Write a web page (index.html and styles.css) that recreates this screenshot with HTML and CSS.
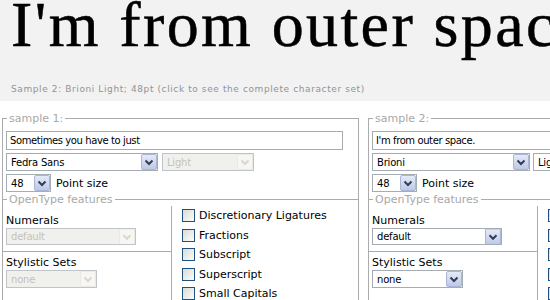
FILE: index.html
```html
<!DOCTYPE html>
<html lang="en">
<head>
    <meta charset="UTF-8">
    <meta name="viewport" content="width=device-width, initial-scale=1.0">
    <title>Font Sampler</title>
    <link rel="stylesheet" href="styles.css">
</head>
<body>
    <div class="header">
        <h1 class="preview">I'm from outer space.</h1>
        <p class="caption">Sample 2: Brioni Light; 48pt (click to see the complete character set)</p>
    </div>

    <div class="samples">
        <fieldset class="sample">
            <legend>sample 1:</legend>
            <input type="text" class="sample-text" value="Sometimes you have to just">
            <div class="row">
                <select class="font-select">
                    <option>Fedra Sans</option>
                </select>
                <select class="weight-select" disabled>
                    <option>Light</option>
                </select>
            </div>
            <div class="row">
                <select class="size-select">
                    <option>48</option>
                </select>
                <label class="size-label">Point size</label>
            </div>

            <fieldset class="features">
                <legend>OpenType features</legend>
                <div class="features-grid">
                    <div class="features-left">
                        <div class="feature-group">
                            <label>Numerals</label>
                            <select class="numerals-select" disabled>
                                <option>default</option>
                            </select>
                        </div>
                        <div class="feature-group">
                            <label>Stylistic Sets</label>
                            <select class="sets-select" disabled>
                                <option>none</option>
                            </select>
                        </div>
                    </div>
                    <ul class="feature-checks">
                        <li><input type="checkbox" id="dlig1"><label for="dlig1">Discretionary Ligatures</label></li>
                        <li><input type="checkbox" id="frac1"><label for="frac1">Fractions</label></li>
                        <li><input type="checkbox" id="subs1"><label for="subs1">Subscript</label></li>
                        <li><input type="checkbox" id="sups1"><label for="sups1">Superscript</label></li>
                        <li><input type="checkbox" id="smcp1"><label for="smcp1">Small Capitals</label></li>
                    </ul>
                </div>
            </fieldset>
        </fieldset>

        <fieldset class="sample">
            <legend>sample 2:</legend>
            <input type="text" class="sample-text" value="I'm from outer space.">
            <div class="row">
                <select class="font-select wide">
                    <option>Brioni</option>
                </select>
                <select class="weight-select near">
                    <option>Light</option>
                </select>
            </div>
            <div class="row">
                <select class="size-select">
                    <option>48</option>
                </select>
                <label class="size-label">Point size</label>
            </div>

            <fieldset class="features">
                <legend>OpenType features</legend>
                <div class="features-grid">
                    <div class="features-left">
                        <div class="feature-group">
                            <label>Numerals</label>
                            <select class="numerals-select">
                                <option>default</option>
                            </select>
                        </div>
                        <div class="feature-group">
                            <label>Stylistic Sets</label>
                            <select class="sets-select">
                                <option>none</option>
                            </select>
                        </div>
                    </div>
                    <ul class="feature-checks">
                        <li><input type="checkbox" id="dlig2"><label for="dlig2">Discretionary Ligatures</label></li>
                        <li><input type="checkbox" id="frac2"><label for="frac2">Fractions</label></li>
                        <li><input type="checkbox" id="subs2"><label for="subs2">Subscript</label></li>
                        <li><input type="checkbox" id="sups2"><label for="sups2">Superscript</label></li>
                        <li><input type="checkbox" id="smcp2"><label for="smcp2">Small Capitals</label></li>
                    </ul>
                </div>
            </fieldset>
        </fieldset>
    </div>
</body>
</html>
```

FILE: styles.css
```css
* {
    margin: 0;
    padding: 0;
    box-sizing: border-box;
}
html, body {
    overflow: hidden;
}
body {
    font-family: "DejaVu Sans", Verdana, sans-serif;
    font-size: 11px;
    color: #000;
    background: #fff;
}
.header {
    background: #f2f2f2;
    height: 101px;
    padding: 0 11px;
    white-space: nowrap;
}
.preview {
    font-family: "Liberation Serif", "Times New Roman", serif;
    font-size: 64px;
    font-weight: normal;
    line-height: 50px;
    letter-spacing: 2.4px;
    -webkit-text-stroke: 0.5px #000;
}
.caption {
    margin-top: 34px;
    font-size: 9px;
    letter-spacing: 0.6px;
    color: #939393;
}
.samples {
    display: flex;
    gap: 9px;
    padding: 11px 0 0 2px;
}
.sample {
    flex: 0 0 357px;
    border: 1px solid #ababab;
    padding: 0 3px;
    height: 300px;
}
legend {
    color: #a8a8a8;
    font-size: 11px;
    line-height: 13px;
    padding: 0 2px;
    margin-left: 1px;
}
.sample-text {
    display: block;
    width: 337px;
    height: 19px;
    margin-top: 6px;
    border: 1px solid #a5acb2;
    padding: 0 3px;
    font-family: "DejaVu Sans", Verdana, sans-serif;
    font-size: 10px;
    letter-spacing: -0.4px;
    color: #000;
    outline: none;
}
.row {
    display: flex;
    align-items: center;
    gap: 4px;
    margin-top: 3px;
}
select {
    appearance: none;
    -webkit-appearance: none;
    height: 18px;
    border: 1px solid #a5acb2;
    border-radius: 0;
    padding: 0 18px 0 4px;
    font-family: "DejaVu Sans", Verdana, sans-serif;
    font-size: 10px;
    letter-spacing: -0.2px;
    color: #000;
    background: #fff url("data:image/svg+xml,%3Csvg xmlns='http://www.w3.org/2000/svg' width='16' height='16'%3E%3Cdefs%3E%3ClinearGradient id='g' x1='0' y1='0' x2='0' y2='1'%3E%3Cstop offset='0' stop-color='%23e6ebf8'/%3E%3Cstop offset='1' stop-color='%23bcc8e6'/%3E%3C/linearGradient%3E%3C/defs%3E%3Crect x='0.5' y='0.5' width='15' height='15' rx='1.5' fill='url(%23g)' stroke='%23aab6d6'/%3E%3Cpath d='M4.5 6.5l3.5 3.5 3.5-3.5' fill='none' stroke='%23333d55' stroke-width='2'/%3E%3C/svg%3E") no-repeat right 0 center / 16px 16px;
}
select:disabled {
    color: #aca899;
    background: #ebebe4 url("data:image/svg+xml,%3Csvg xmlns='http://www.w3.org/2000/svg' width='16' height='16'%3E%3Crect x='0.5' y='0.5' width='15' height='15' rx='1.5' fill='%23f4f3ee' stroke='%23e2e0d8'/%3E%3Cpath d='M4.5 6.5l3.5 3.5 3.5-3.5' fill='none' stroke='%23c9c7ba' stroke-width='2'/%3E%3C/svg%3E") no-repeat right 0 center / 16px 16px;
}
.font-select {
    width: 152px;
}
.font-select.wide {
    width: 158px;
}
.weight-select {
    width: 92px;
}
.weight-select.near {
    margin-left: -1px;
}
.size-select {
    width: 45px;
}
.size-label {
    margin-left: 1px;
    font-size: 11px;
}
.features {
    margin: 1px -4px 0;
    border: 1px solid #ababab;
    border-bottom: none;
    padding: 0;
}
.features legend {
    margin-left: 4px;
}
.features-grid {
    display: flex;
}
.features-left {
    width: 169px;
    border-right: 1px solid #ababab;
    height: 120px;
}
.feature-group {
    padding: 8px 3px 6px;
}
.feature-group + .feature-group {
    border-top: 1px solid #ababab;
    padding-top: 4px;
}
.feature-group label {
    display: block;
    line-height: 13px;
    margin-bottom: 1px;
}
.numerals-select {
    width: 130px;
    height: 17px;
}
.sets-select {
    width: 91px;
}
.feature-checks {
    list-style: none;
    padding-left: 10px;
    margin-top: 0;
}
.feature-checks li {
    display: flex;
    align-items: center;
    gap: 4px;
    height: 19.5px;
}
.feature-checks input {
    appearance: none;
    -webkit-appearance: none;
    width: 13px;
    height: 13px;
    border: 1px solid #1c5180;
    background: linear-gradient(135deg, #dcdcd6, #fbfbf9);
}
```
